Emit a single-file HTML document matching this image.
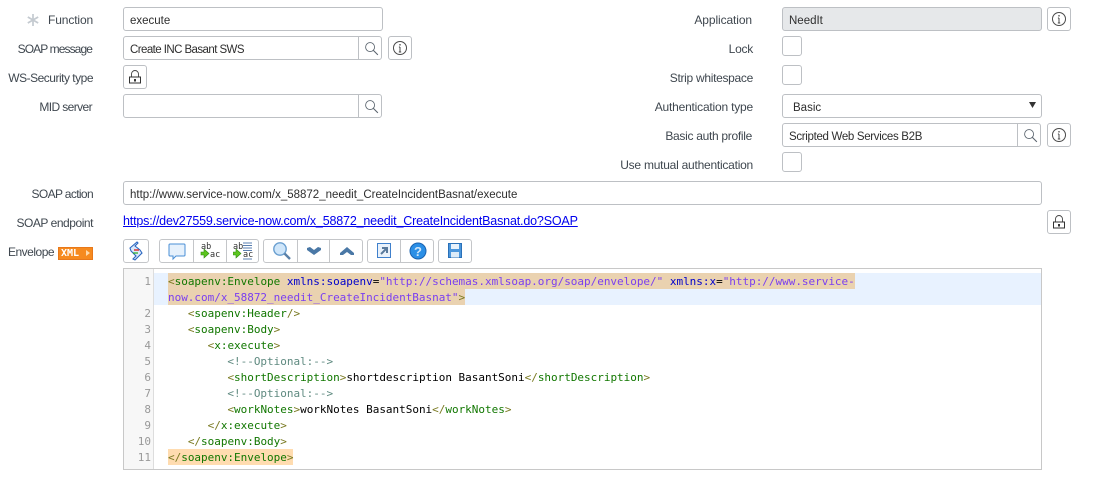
<!DOCTYPE html>
<html><head><meta charset="utf-8"><style>
html,body{margin:0;padding:0;background:#fff;width:1104px;height:482px;overflow:hidden}
body{position:relative;font-family:"Liberation Sans",sans-serif;font-size:12px;color:#343d47}
.a{position:absolute;box-sizing:border-box}
.l{position:absolute;text-align:right;white-space:nowrap;line-height:16px;color:#3f474f;font-size:12px}
.i{position:absolute;box-sizing:border-box;height:24px;border:1px solid #bdc0c4;border-radius:3px;background:#fff;line-height:26px;padding-left:6px;color:#2e2e2e;font-size:11.5px;white-space:nowrap}
.d{position:absolute;top:0;bottom:0;width:1px;background:#bdc0c4}
.c{position:absolute;box-sizing:border-box;width:20px;height:20px;border:1px solid #bdc0c4;border-radius:3px;background:#fff}
.b{position:absolute;box-sizing:border-box;width:24px;height:24px;border:1px solid #bdc0c4;border-radius:3px;background:#fff}
.b svg,.i svg{position:absolute}
.t{position:absolute;box-sizing:border-box;top:239px;height:24px;border:1px solid #c4c6c9;border-radius:3px;background:#fff}
.t svg{position:absolute;top:1px}
.s{position:absolute;top:0;bottom:0;width:1px;background:#c4c6c9}
.ln{position:absolute;left:124px;width:27px;text-align:right;font:11px/18px "DejaVu Sans Mono",monospace;color:#999;letter-spacing:-.02px}
.cd{position:absolute;left:168px;font:11px/18px "DejaVu Sans Mono",monospace;white-space:pre;color:#000;letter-spacing:-.02px}
.g{color:#117700}.k{color:#7a7a22}.n{color:#0000cc}.v{color:#7a3ff0}.m{color:#5f8a80}
.h{background:#ead2b0}.o{background:#ffdcb0}
</style></head><body>
<svg width="0" height="0" style="position:absolute"><defs>
<symbol id="mag" viewBox="0 0 16 16"><circle cx="6.5" cy="6.5" r="4.800" fill="none" stroke="#5a646e" stroke-width=".9"/><path d="M10 10l4.800 4.800" stroke="#5a646e" stroke-width="1.100"/></symbol>
<symbol id="inf" viewBox="0 0 16 16"><circle cx="8" cy="8" r="6.5" fill="none" stroke="#4a4a4a" stroke-width="1"/><path d="M8 7v5M6.8 12h2.400M6.900 7H8" stroke="#4a4a4a" stroke-width="1" fill="none"/><circle cx="8" cy="4.800" r=".8" fill="#4a4a4a"/></symbol>
<symbol id="lock" viewBox="0 0 16 16"><path d="M4.500 8V5a3.500 3.500 0 0 1 7 0v3" fill="none" stroke="#444" stroke-width=".9"/><rect x="2.500" y="8" width="11" height="6" fill="none" stroke="#333" stroke-width="1"/><rect x="7" y="10" width="2" height="2.500" fill="#333"/></symbol>
</defs></svg>

<svg class="a" style="left:26px;top:13px" width="14" height="14" viewBox="0 0 14 14"><path d="M7 1v12M1.800 4l10.400 6M12.200 4L1.800 10" stroke="#c4cad0" stroke-width="1.700"/></svg>
<div class="l" style="left:48px;top:12px;letter-spacing:-.12px">Function</div>
<div class="l" style="right:1012px;top:41px;letter-spacing:-.9px">SOAP message</div>
<div class="l" style="right:1011px;top:70px;letter-spacing:-.5px">WS-Security type</div>
<div class="l" style="right:1012px;top:99px;letter-spacing:-.6px">MID server</div>
<div class="l" style="right:1011px;top:186px;letter-spacing:-.64px">SOAP action</div>
<div class="l" style="right:1011px;top:215px;letter-spacing:-.46px">SOAP endpoint</div>
<div class="l" style="left:8px;top:244px;letter-spacing:-.5px">Envelope</div>

<div class="a" style="left:58px;top:247px;width:35px;height:13px;background:#f68a1f;border:1px solid #e8781a;color:#fff;font:bold 10px/11px 'DejaVu Sans Mono',monospace;padding-left:2px">XML<span style="position:absolute;right:2px;top:2px;border-left:4px solid #ffd9a8;border-top:3px solid transparent;border-bottom:3px solid transparent"></span></div>

<div class="i" style="left:123px;top:7px;width:260px">execute</div>
<div class="i" style="left:123px;top:36px;width:259px;letter-spacing:-.57px">Create INC Basant SWS<div class="d" style="left:234px"></div><svg style="left:240px;top:4px" width="15" height="15"><use href="#mag"/></svg></div>
<div class="b" style="left:388px;top:36px"><svg style="left:3px;top:3px" width="16" height="16"><use href="#inf"/></svg></div>
<div class="b" style="left:123px;top:65px"><svg style="left:3px;top:3px" width="16" height="16"><use href="#lock"/></svg></div>
<div class="i" style="left:123px;top:94px;width:259px"><div class="d" style="left:234px"></div><svg style="left:240px;top:4px" width="15" height="15"><use href="#mag"/></svg></div>

<div class="l" style="right:352px;top:12px;letter-spacing:-.1px">Application</div>
<div class="l" style="right:351px;top:41px;letter-spacing:-.25px">Lock</div>
<div class="l" style="right:351px;top:70px;letter-spacing:-.3px">Strip whitespace</div>
<div class="l" style="right:351px;top:99px;letter-spacing:-.2px">Authentication type</div>
<div class="l" style="right:352px;top:128px;letter-spacing:-.3px">Basic auth profile</div>
<div class="l" style="right:351px;top:157px;letter-spacing:-.24px">Use mutual authentication</div>

<div class="i" style="left:782px;top:7px;width:260px;background:#e6e8ea">NeedIt</div>
<div class="b" style="left:1047px;top:7px"><svg style="left:3px;top:3px" width="16" height="16"><use href="#inf"/></svg></div>
<div class="c" style="left:782px;top:36px"></div>
<div class="c" style="left:782px;top:65px"></div>
<div class="i" style="left:782px;top:94px;width:260px;padding-left:10px">Basic<svg style="left:246px;top:7px" width="8" height="7"><path d="M0 0h7L3.500 6z" fill="#333"/></svg></div>
<div class="i" style="left:782px;top:123px;width:259px;letter-spacing:-.32px">Scripted Web Services B2B<div class="d" style="left:234px"></div><svg style="left:240px;top:4px" width="15" height="15"><use href="#mag"/></svg></div>
<div class="b" style="left:1047px;top:123px"><svg style="left:3px;top:3px" width="16" height="16"><use href="#inf"/></svg></div>
<div class="c" style="left:782px;top:152px"></div>

<div class="i" style="left:123px;top:181px;width:919px">http://www.service-now.com/x_58872_needit_CreateIncidentBasnat/execute</div>
<a class="a" style="left:123px;top:212px;color:#0000ee;text-decoration:underline;font-size:12.5px;letter-spacing:-.17px;line-height:18px;white-space:nowrap">https://dev27559.service-now.com/x_58872_needit_CreateIncidentBasnat.do?SOAP</a>
<div class="b" style="left:1047px;top:210px"><svg style="left:3px;top:3px" width="16" height="16"><use href="#lock"/></svg></div>

<!-- toolbar -->
<div class="t" style="left:123px;width:26px"><svg style="left:3px" width="18" height="20" viewBox="0 0 18 20"><path d="M10 1L3 7l1 3 5 5-3 3 2 1 7-7-2-3-5-4 3-3z" fill="#dbe9fb" stroke="#2a66c0" stroke-width="1.100"/><path d="M7 9l5 0" stroke="#d33" stroke-width="1.500"/><path d="M6 12l5 0" stroke="#2a2" stroke-width="1.200"/></svg></div>

<div class="t" style="left:159px;width:100px">
<div class="s" style="left:33px"></div><div class="s" style="left:66px"></div>
<svg style="left:7px" width="20" height="20" viewBox="0 0 20 20"><path d="M3 3h14a1 1 0 0 1 1 1v10a1 1 0 0 1-1 1H9l-3 3v-3H3a1 1 0 0 1-1-1V4a1 1 0 0 1 1-1z" fill="#e6f1fc" stroke="#4a8fd6"/></svg>
<svg style="left:40px" width="20" height="20" viewBox="0 0 20 20"><text x="1" y="8" font-family="DejaVu Sans Mono" font-size="8.500" fill="#333">ab</text><text x="10" y="16" font-family="DejaVu Sans Mono" font-size="8.500" fill="#333">ac</text><path d="M1 11h3V8l5 4.500L4 17v-3H1z" fill="#5cc51e" stroke="#2e8a10" stroke-width=".6"/></svg>
<svg style="left:73px" width="20" height="20" viewBox="0 0 20 20"><text x="0" y="8" font-family="DejaVu Sans Mono" font-size="8.500" fill="#333">ab</text><text x="10" y="16" font-family="DejaVu Sans Mono" font-size="8.500" fill="#333">ac</text><path d="M10 2h9M10 4.500h9M10 7h9M10 9.500h9M10 18h9" stroke="#5a7fb0"/><path d="M0 11h3V8l5 4.500L3 17v-3H0z" fill="#5cc51e" stroke="#2e8a10" stroke-width=".6"/></svg>
</div>

<div class="t" style="left:263px;width:100px">
<div class="s" style="left:33px"></div><div class="s" style="left:65px"></div>
<svg style="left:8px;top:1px" width="20" height="20" viewBox="0 0 20 20"><circle cx="8" cy="8" r="6.200" fill="#cfe6fa" stroke="#6a9fd0" stroke-width="1.400"/><path d="M12.500 12.500l5.500 5.500" stroke="#5a80a8" stroke-width="2.400"/></svg>
<svg style="left:42px;top:3px" width="16" height="16" viewBox="0 0 16 16"><path d="M1 5l3-1 4 3 4-3 3 1v2l-7 5-7-5z" fill="#4a78a6"/></svg>
<svg style="left:75px;top:3px" width="16" height="16" viewBox="0 0 16 16"><path d="M1 10l7-6 7 6v2l-3 0-4-3-4 3-3 0z" fill="#4a78a6"/></svg>
</div>

<div class="t" style="left:367px;width:67px">
<div class="s" style="left:32px"></div>
<svg style="left:9px;top:3px" width="15" height="16" viewBox="0 0 15 16"><rect x=".5" y=".5" width="13" height="14" fill="#eaf2fb" stroke="#3f80cc"/><path d="M4 11l5-5M5 5h5v5" stroke="#5a7a9c" stroke-width="2" fill="none"/></svg>
<svg style="left:41px;top:2px" width="18" height="18" viewBox="0 0 18 18"><circle cx="9" cy="9" r="8" fill="#2b8fe6" stroke="#1a62b0"/><text x="9" y="14" text-anchor="middle" font-family="Liberation Sans" font-weight="bold" font-size="13" fill="#cfe6fa">?</text></svg>
</div>

<div class="t" style="left:438px;width:34px"><svg style="left:9px;top:3px" width="15" height="16" viewBox="0 0 15 16"><rect x=".5" y=".5" width="13" height="14" fill="#4a96dc" stroke="#2a70b8"/><rect x="3" y="1" width="8" height="5" fill="#e8f2fb"/><rect x="3" y="9" width="8" height="5.500" fill="#dcebf8"/></svg></div>

<!-- editor -->
<div class="a" style="left:123px;top:268px;width:919px;height:202px;border:1px solid #c8c8c8;background:#fff"></div>
<div class="a" style="left:124px;top:269px;width:30px;height:200px;background:#f7f7f7;border-right:1px solid #ddd"></div>
<div class="a" style="left:154px;top:273px;width:887px;height:32px;background:#e8f2ff"></div>

<div class="ln" style="top:273px">1</div>
<div class="ln" style="top:305px">2</div>
<div class="ln" style="top:321px">3</div>
<div class="ln" style="top:337px">4</div>
<div class="ln" style="top:353px">5</div>
<div class="ln" style="top:369px">6</div>
<div class="ln" style="top:385px">7</div>
<div class="ln" style="top:401px">8</div>
<div class="ln" style="top:417px">9</div>
<div class="ln" style="top:433px">10</div>
<div class="ln" style="top:449px">11</div>

<div class="cd h" style="top:273px;height:16px"><span class="k">&lt;</span><span class="g">soapenv:Envelope</span> <span class="n">xmlns:soapenv</span>=<span class="v">"http://schemas.xmlsoap.org/soap/envelope/"</span> <span class="n">xmlns:x</span>=<span class="v">"http://www.service-</span></div>
<div class="cd h" style="top:289px;height:16px"><span class="v">now.com/x_58872_needit_CreateIncidentBasnat"</span><span class="k">&gt;</span></div>
<div class="cd" style="top:305px">   <span class="k">&lt;</span><span class="g">soapenv:Header</span><span class="k">/&gt;</span></div>
<div class="cd" style="top:321px">   <span class="k">&lt;</span><span class="g">soapenv:Body</span><span class="k">&gt;</span></div>
<div class="cd" style="top:337px">      <span class="k">&lt;</span><span class="g">x:execute</span><span class="k">&gt;</span></div>
<div class="cd m" style="top:353px">         &lt;!--Optional:--&gt;</div>
<div class="cd" style="top:369px">         <span class="k">&lt;</span><span class="g">shortDescription</span><span class="k">&gt;</span>shortdescription BasantSoni<span class="k">&lt;/</span><span class="g">shortDescription</span><span class="k">&gt;</span></div>
<div class="cd m" style="top:385px">         &lt;!--Optional:--&gt;</div>
<div class="cd" style="top:401px">         <span class="k">&lt;</span><span class="g">workNotes</span><span class="k">&gt;</span>workNotes BasantSoni<span class="k">&lt;/</span><span class="g">workNotes</span><span class="k">&gt;</span></div>
<div class="cd" style="top:417px">      <span class="k">&lt;/</span><span class="g">x:execute</span><span class="k">&gt;</span></div>
<div class="cd" style="top:433px">   <span class="k">&lt;/</span><span class="g">soapenv:Body</span><span class="k">&gt;</span></div>
<div class="cd o" style="top:449px;height:16px"><span class="k">&lt;/</span><span class="g">soapenv:Envelope</span><span class="k">&gt;</span></div>
</body></html>
